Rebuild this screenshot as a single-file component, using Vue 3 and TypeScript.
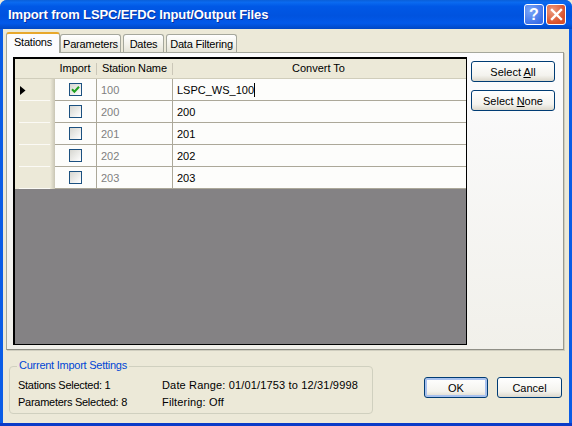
<script setup lang="ts">
interface Row { id: string; to: string; checked: boolean }
interface Tab { label: string; width: number }
const rows: Row[] = [
  { id: '100', to: 'LSPC_WS_100', checked: true },
  { id: '200', to: '200', checked: false },
  { id: '201', to: '201', checked: false },
  { id: '202', to: '202', checked: false },
  { id: '203', to: '203', checked: false },
]
const tabs: Tab[] = [
  { label: 'Stations', width: 54 },
  { label: 'Parameters', width: 61 },
  { label: 'Dates', width: 41 },
  { label: 'Data Filtering', width: 71 },
]
</script>

<template>
  <div class="window">
    <div class="titlebar">
      <span class="title">Import from LSPC/EFDC Input/Output Files</span>
      <div class="caps">
        <div class="cap help">?</div>
        <div class="cap close">
          <svg width="13" height="13" viewBox="0 0 13 13"><path d="M2 2 L11 11 M11 2 L2 11" stroke="#fff" stroke-width="2.4" stroke-linecap="square" fill="none" /></svg>
        </div>
      </div>
    </div>
    <div class="client">
      <div class="tabs">
        <div v-for="(t, i) in tabs" :key="t.label" class="tab" :class="{ active: i === 0 }" :style="{ width: t.width + 'px' }">{{ t.label }}</div>
      </div>
      <div class="panel">
        <div class="grid">
          <div class="hrow">
            <div class="rh corner"></div>
            <div class="hc c1"><span>Import</span></div>
            <div class="hc c2"><span>Station Name</span></div>
            <div class="hc c3 center"><span>Convert To</span></div>
          </div>
          <div v-for="(r, i) in rows" :key="r.id" class="row">
            <div class="rh">
              <svg v-if="i === 0" class="arrow" width="6" height="9" viewBox="0 0 6 9"><path d="M0 0 L5.5 4.5 L0 9 Z" fill="#000" /></svg>
            </div>
            <div class="cell c1 chk">
              <div class="box">
                <svg v-if="r.checked" width="9" height="9" viewBox="0 0 9 9"><path d="M1 4.2 L3.4 6.7 L8 1.8" stroke="#21a121" stroke-width="2" fill="none" /></svg>
              </div>
            </div>
            <div class="cell c2 muted">{{ r.id }}</div>
            <div class="cell c3"><span>{{ r.to }}</span><span v-if="i === 0" class="caret"></span></div>
          </div>
        </div>
        <div class="side">
          <button class="btn wide"><span>Select <u>A</u>ll</span></button>
          <button class="btn wide"><span>Select <u>N</u>one</span></button>
        </div>
      </div>
      <div class="bottom">
        <div class="group">
          <div class="legend">Current Import Settings</div>
          <div class="info">
            <div class="col1">
              <div>Stations Selected: 1</div>
              <div>Parameters Selected: 8</div>
            </div>
            <div class="col2">
              <div>Date Range: 01/01/1753 to 12/31/9998</div>
              <div>Filtering: Off</div>
            </div>
          </div>
        </div>
        <div class="actions">
          <button class="btn ok default">OK</button>
          <button class="btn cancel">Cancel</button>
        </div>
      </div>
    </div>
  </div>
</template>

<style>
html, body { margin: 0; padding: 0; background: #ece9d8; }
</style>

<style scoped>
.window {
  width: 572px; height: 426px; box-sizing: border-box;
  display: flex; flex-direction: column;
  font-family: "Liberation Sans", Arial, sans-serif; font-size: 11px; color: #000;
  background: #0a5ce6; overflow: hidden; border-radius: 7px 7px 0 0; border-bottom: 3px solid #0a3bc8;
}
.titlebar {
  height: 29px; flex: none; display: flex; align-items: center; justify-content: space-between;
  padding: 0 6px 0 8px; box-sizing: border-box;
  background: linear-gradient(180deg, #0a5fd8 0%, #0a6af0 8%, #0058e6 22%, #0053df 55%, #0259ea 80%, #0047c4 100%);
}
.title { color: #fff; font-weight: 700; font-size: 13px; letter-spacing: -0.12px; text-shadow: 1px 1px 0 #0b2f9e; }
.caps { display: flex; gap: 2px; }
.cap {
  width: 20px; height: 21px; box-sizing: border-box; border: 1px solid #fff; border-radius: 3px;
  display: flex; align-items: center; justify-content: center;
}
.help { background: radial-gradient(circle at 30% 30%, #7ba6f7, #3a6ee8 80%); color: #fff; font: 700 16px "Liberation Sans", sans-serif; }
.close { background: radial-gradient(circle at 30% 30%, #ec9a7e, #d8502a 70%); }
.client {
  flex: 1; margin: 0 3px; background: #ece9d8; display: flex; flex-direction: column;
  padding: 3px 5px 0 3px;
  min-height: 0;
}
.tabs { display: flex; height: 20px; align-items: flex-end; position: relative; z-index: 1; gap: 2px; }
.tab {
  height: 18px; box-sizing: border-box; border: 1px solid #a5a79c; border-bottom: 0; text-align: center; letter-spacing: -0.2px;
  border-radius: 3px 3px 0 0; background: linear-gradient(180deg, #fff, #f2f1e9 60%, #e6e4d8); line-height: 18px;
}
.tab.active {
  height: 21px; background: #fcfcfe; border-top: 2px solid #e8a82c; border-color: #e8a82c #a5a79c #fcfcfe;
  margin-bottom: -1px; line-height: 17px; margin-right: -2px; position: relative; z-index: 1;
}
.panel {
  height: 298px; box-sizing: border-box; border: 1px solid #a5a79c; border-right-color: #9a9a90; border-bottom-color: #8f8f86;
  background: linear-gradient(180deg, #fcfcfe, #f1f0ea);
  display: flex; padding: 4px 0 0 6px; gap: 4px; box-shadow: 1px 1px 0 #d0cebf;
}
.grid {
  width: 454px; height: 288px; box-sizing: border-box; background: #848284;
  border: 1px solid #000; border-width: 2px 1px 1px 2px; display: flex; flex-direction: column;
}
.hrow { height: 20px; display: flex; background: #ece9d8; border-bottom: 1px solid #d0cdbb; box-sizing: border-box; flex: none; }
.row { height: 22px; display: flex; background: #fdfdfb; flex: none; box-sizing: border-box; border-bottom: 1px solid #aca899; }
.rh {
  width: 40px; flex: none; box-sizing: border-box; position: relative;
  background: linear-gradient(90deg, #ece9d8 88%, #c9c6b5 100%);
  margin-bottom: -1px; display: flex; align-items: center;
}
.rh::after { content: ""; position: absolute; left: 4px; right: 5px; bottom: 0; height: 1px; background: #fbfaf5; }
.corner { margin-bottom: 0; background: #ece9d8; }
.corner::after { display: none; }
.arrow { margin-left: 5px; }
.c1 { width: 42px; flex: none; }
.c2 { width: 76px; flex: none; }
.c3 { flex: 1; }
.hc { display: flex; align-items: center; justify-content: center; box-sizing: border-box; position: relative; white-space: nowrap; padding-bottom: 1px; }
.hc.c1 { padding-right: 2px; }
.hc.c2 { justify-content: flex-start; padding-left: 5px; letter-spacing: -0.15px; }
.hc.c3 { padding-right: 2px; }
.hc.c1::after, .hc.c2::after { content: ""; position: absolute; right: 0; top: 4px; height: 12px; width: 1px; background: #cbc7b8; }
.center { justify-content: center; }
.cell { box-sizing: border-box; display: flex; align-items: center; border-right: 1px solid #aca899; padding-left: 4px; white-space: nowrap; }
.c3.cell { border-right: none; }
.muted { color: #808080; }
.chk { justify-content: center; padding-left: 0; }
.box {
  width: 13px; height: 13px; box-sizing: border-box; border: 1px solid #1c5180;
  background: linear-gradient(135deg, #d6d6d0, #fff); display: flex; align-items: center; justify-content: center;
}
.caret { width: 1px; height: 14px; background: #000; }
.side { display: flex; flex-direction: column; gap: 8px; padding-top: 4px; }
.btn {
  font: inherit; color: #000; padding: 0; box-sizing: border-box; height: 21px; border: 1px solid #003c74; border-radius: 3px;
  background: linear-gradient(180deg, #fff, #f4f3ee 70%, #dcd8cc); display: flex; align-items: center; justify-content: center;
}
.wide { width: 84px; }
.bottom { flex: 1; display: flex; align-items: flex-start; padding: 16px 0 0 3px; gap: 51px; }
.group {
  width: 364px; height: 48px; box-sizing: border-box; border: 1px solid #d0d0bf; border-radius: 4px; position: relative;
  padding: 10px 8px 0;
}
.legend { position: absolute; left: 7px; top: -9px; padding: 0 2px; background: #ece9d8; color: #0046d5; line-height: 15px; letter-spacing: -0.25px; }
.info { display: flex; line-height: 17px; }
.col1 { width: 144px; letter-spacing: -0.27px; }
.col2 { letter-spacing: 0.16px; }
.actions { display: flex; gap: 9px; padding-top: 11px; }
.ok { width: 64px; }
.cancel { width: 65px; }
.default { box-shadow: inset 0 0 0 2px #a8c1ee; }
</style>
